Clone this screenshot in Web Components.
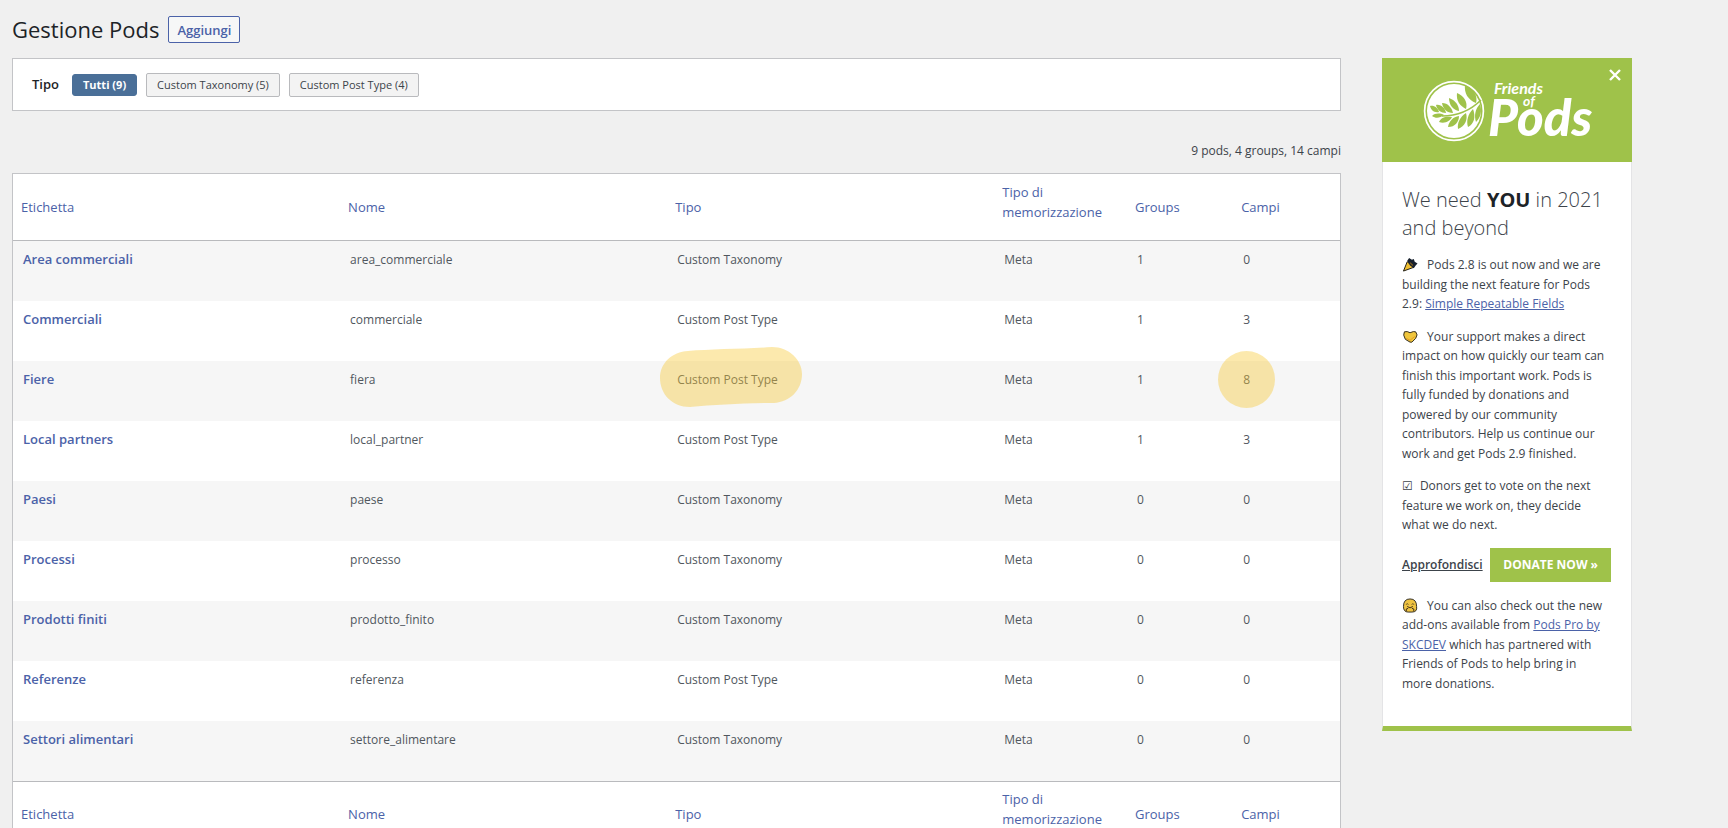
<!DOCTYPE html>
<html lang="it">
<head>
<meta charset="utf-8">
<title>Gestione Pods</title>
<style>
  body { margin: 0; background: #f0f0f0; color: #3c434a; font: 13px/1.5 "Open Sans", "Noto Sans", sans-serif; --link: #4b62a8; --line: #c3c4c7; --green: #9fc24a; }
</style>
</head>
<body>
<pods-page>
  <pods-heading>Gestione Pods</pods-heading>
  <pods-filter></pods-filter>
  <pods-table></pods-table>
  <friends-callout slot="aside"></friends-callout>
</pods-page>

<script>
const define = (name, html, setup) => customElements.define(name, class extends HTMLElement {
  constructor() {
    super();
    this.attachShadow({ mode: "open" }).innerHTML = html;
    if (setup) setup(this.shadowRoot, this);
  }
});

define("pods-page", `
  <style>
    :host { display: grid; grid-template-columns: minmax(0, 1fr) 250px; column-gap: 41px; padding: 12px 96px 0 12px; align-items: start; }
    aside { margin-top: 46px; }
    main { min-width: 0; }
  </style>
  <main><slot></slot></main>
  <aside><slot name="aside"></slot></aside>`);

define("pods-heading", `
  <style>
    :host { display: flex; align-items: center; gap: 9px; height: 34px; margin-bottom: 12px; }
    h1 { margin: 0; font-size: 22px; line-height: 34px; font-weight: 400; color: #1d2327; }
    a { box-sizing: border-box; height: 27px; padding: 0 8px; border: 1px solid var(--link); border-radius: 2px; background: #f6f7f7; color: var(--link); font-size: 13px; line-height: 26px; font-weight: 600; text-decoration: none; }
  </style>
  <h1><slot></slot></h1><a href="#add">Aggiungi</a>`);

define("pods-filter", `
  <style>
    :host { display: flex; align-items: center; box-sizing: border-box; height: 53px; padding: 0 19px; gap: 9px; background: #fff; border: 1px solid var(--line); }
    strong { font-size: 13px; font-weight: 600; color: #1d2327; margin-right: 4px; }
    button { box-sizing: border-box; height: 24px; padding: 0 10px; border: 1px solid #b9babd; border-radius: 2px; background: #f3f3f3; color: #3c434a; font: 11px/22px "Open Sans", "Noto Sans", sans-serif; white-space: nowrap; }
    button[aria-pressed="true"] { height: 22px; line-height: 20px; background: #4a6f98; border-color: #4a6f98; border-radius: 3px; color: #fff; font-weight: 700; }
  </style>
  <strong>Tipo</strong>
  <button type="button" aria-pressed="true">Tutti (9)</button>
  <button type="button" aria-pressed="false">Custom Taxonomy (5)</button>
  <button type="button" aria-pressed="false">Custom Post Type (4)</button>`);

define("marker-highlight", `
  <style>
    :host { position: absolute; pointer-events: none; display: block; }
    :host([shape="pill"]) { left: -7px; top: -14px; }
    :host([shape="dot"]) { left: -15px; top: -10px; }
    svg { display: none; fill: #f8c832; fill-opacity: .4; }
    :host([shape="pill"]) .pill, :host([shape="dot"]) .dot { display: block; }
  </style>
  <svg class="pill" width="142" height="60" viewBox="0 0 142 60"><path d="M28 4 C50 2 85 2 112 0 C129 0 142 13 142 27 C142 43 130 55 114 56 C85 56 55 58 30 60 C12 60 0 47 0 31 C0 16 12 5 28 4Z"/></svg>
  <svg class="dot" width="57" height="57" viewBox="0 0 57 57"><circle cx="28.5" cy="28.5" r="28.5"/></svg>`);

const columns = ["Etichetta", "Nome", "Tipo", "Tipo di memorizzazione", "Groups", "Campi"];
const TAX = "Custom Taxonomy", CPT = "Custom Post Type";
const pods = [
  ["Area commerciali", "area_commerciale", TAX, "Meta", 1, 0],
  ["Commerciali", "commerciale", CPT, "Meta", 1, 3],
  ["Fiere", "fiera", CPT, "Meta", 1, 8],
  ["Local partners", "local_partner", CPT, "Meta", 1, 3],
  ["Paesi", "paese", TAX, "Meta", 0, 0],
  ["Processi", "processo", TAX, "Meta", 0, 0],
  ["Prodotti finiti", "prodotto_finito", TAX, "Meta", 0, 0],
  ["Referenze", "referenza", CPT, "Meta", 0, 0],
  ["Settori alimentari", "settore_alimentare", TAX, "Meta", 0, 0]
];
const marks = { "fiera:2": "pill", "fiera:5": "dot" };

define("pods-table", `
  <style>
    :host { display: block; }
    .count { margin: 30px 0 12px; text-align: right; font-size: 12px; line-height: 20px; color: #3c434a; }
    .frame { border: 1px solid var(--line); background: #fff; }
    table { width: 100%; border-collapse: separate; border-spacing: 0; table-layout: fixed; }
    .wide { width: 24.65%; } .store { width: 10%; } .num { width: 8%; }
    th { height: 67px; box-sizing: border-box; padding: 8px 8px 18px; text-align: left; vertical-align: middle; font-weight: 400; line-height: 20px; }
    thead th { border-bottom: 1px solid #b9babd; }
    th.single { padding-top: 16px; padding-bottom: 16px; }
    tfoot th { border-top: 1px solid #b9babd; padding-top: 6px; }
    tfoot th.single { padding-top: 14px; }
    th a { color: var(--link); text-decoration: none; font-size: 13px; }
    td { position: relative; height: 60px; box-sizing: border-box; padding: 8px 10px; vertical-align: top; font-size: 12px; line-height: 21px; color: #50575e; }
    td a { color: var(--link); font-size: 13px; font-weight: 600; text-decoration: none; }
    tbody tr:nth-child(odd) { background: #f6f6f6; }
  </style>
  <p class="count">9 pods, 4 groups, 14 campi</p>
  <div class="frame"><table>
    <colgroup><col class="wide"><col class="wide"><col class="wide"><col class="store"><col class="num"><col></colgroup>
    <thead></thead><tbody></tbody><tfoot></tfoot>
  </table></div>`, root => {
  const head = "<tr>" + columns.map(c => `<th scope="col" class="${c.length > 12 ? "" : "single"}"><a href="#sort">${c}</a></th>`).join("") + "</tr>";
  root.querySelector("thead").innerHTML = head;
  root.querySelector("tfoot").innerHTML = head;
  root.querySelector("tbody").innerHTML = pods.map(p => "<tr>" + p.map((v, i) => {
    const shape = marks[p[1] + ":" + i];
    return `<td>${i ? v : `<a href="#edit">${v}</a>`}${shape ? `<marker-highlight shape="${shape}"></marker-highlight>` : ""}</td>`;
  }).join("") + "</tr>").join("");
});

define("friends-logo", `
  <style>
    :host { display: block; }
    svg { display: block; overflow: visible; }
    text { font-family: Lato, sans-serif; font-style: italic; fill: #fff; }
  </style>
  <svg width="170" height="74" viewBox="0 0 170 74" role="img" aria-label="Friends of Pods">
    <circle cx="32" cy="38" r="29.4" fill="none" stroke="#fff" stroke-width="1.7"/>
    <circle cx="32" cy="38" r="27" fill="#fff"/>
    <path d="M20 43 C36 43 48 38 59 27" fill="none" stroke="#9fc24a" stroke-width="1.6"/>
    <g fill="#9fc24a">
      <path d="M8 33 C12 32 16 35 17 39 C12 40 9 37 8 33Z"/>
      <path d="M14 32 C19 31 23 35 24 40 C19 40 15 37 14 32Z"/>
      <path d="M20 30 C26 30 30 35 31 40 C25 40 21 36 20 30Z"/>
      <path d="M27 25 C33 27 37 32 37 38 C31 37 27 32 27 25Z"/>
      <path d="M35 20 C42 23 46 29 44 36 C38 33 34 28 35 20Z"/>
      <path d="M43 12 C52 16 56 23 54 30 C46 27 42 20 43 12Z"/>
      <path d="M10 43 C13 40 18 40 22 42 C18 45 14 46 10 43Z"/>
      <path d="M17 49 C19 44 24 43 30 44 C28 48 23 51 17 49Z"/>
      <path d="M26 54 C27 48 31 44 37 43 C37 49 33 54 26 54Z"/>
      <path d="M36 56 C35 50 38 44 44 40 C46 47 43 53 36 56Z"/>
      <path d="M46 54 C44 48 46 41 51 36 C54 44 52 51 46 54Z"/>
      <path d="M54 49 C52 43 53 36 58 31 C60 38 59 44 54 49Z"/>
    </g>
    <text x="72" y="21" font-size="16" font-weight="700">Friends</text>
    <text x="101" y="33" font-size="14" font-weight="700">of</text>
    <text x="66" y="63" font-size="51" font-weight="900">Pods</text>
  </svg>`);

const icons = {
  party: `<path d="M1 15 L5 5 L12 11Z" fill="#efbf32" stroke="#15130d"/><path d="M5 4 L7 1 L10 3 L12 2 L13 5 L16 7 L14 9 L12 12 L8 9Z" fill="#17202d"/><path d="M8 6 L11 9" stroke="#7a5b20" stroke-width="1.4"/>`,
  heart: `<path d="M8 14 L3 11 Q0 6 2 3 Q5 2 8 4 Q12 2 14 3 Q17 6 14 10 L10 14Z" fill="#f0c63d" stroke="#2a251c"/><path d="M4 10 L8 12 L13 8" fill="none" stroke="#e19a24"/>`,
  hug: `<path d="M8 1 Q15 1 15 9 Q16 15 10 15 H6 Q1 15 1 9 Q1 1 8 1Z" fill="#efc341" stroke="#2a251c"/><path d="M4 7q1-2 2 0M10 7q1-2 2 0M5 9q3 3 6 0M4 14q-1-3 2-3M12 14q1-3-2-3" fill="none" stroke="#352817"/>`
};
customElements.define("emoji-icon", class extends HTMLElement {
  constructor() { super(); this.attachShadow({ mode: "open" }); }
  connectedCallback() {
    this.shadowRoot.innerHTML = `<style>:host { display: inline-block; width: 17px; height: 15px; margin-right: 5px; vertical-align: -3px; } svg { display: block; }</style>
      <svg width="17" height="15" viewBox="0 0 17 16" aria-hidden="true">${icons[this.getAttribute("name")]}</svg>`;
  }
});

define("friends-callout", `
  <style>
    :host { display: block; box-sizing: border-box; background: #fff; border: 1px solid #e4e4e6; border-top: 0; border-bottom: 5px solid var(--green); }
    header { position: relative; height: 104px; margin: 0 -1px; background: var(--green); display: flex; justify-content: center; align-items: center; }
    .close { position: absolute; top: 7px; right: 7px; width: 20px; height: 20px; padding: 0; border: 0; background: none; }
    .close svg { display: block; margin: 4px; }
    .body { padding: 24px 18px 20px 19px; }
    h2 { margin: 0 0 13px; font-size: 20px; line-height: 28px; font-weight: 300; color: #3c434a; }
    h2 b { font-weight: 700; color: #1d2327; }
    p { margin: 0 0 13px; font-size: 12px; line-height: 1.625; color: #3c434a; }
    a { color: var(--link); }
    .actions { display: flex; align-items: center; justify-content: space-between; margin: 0 2px 14px 0; }
    .more { color: #3c434a; font-size: 12px; font-weight: 600; }
    .donate { background: var(--green); color: #fff; font-size: 12px; line-height: 34px; font-weight: 700; padding: 0 13px; text-decoration: none; white-space: nowrap; }
    .check { font-family: "DejaVu Sans", sans-serif; font-size: 12px; margin-right: 4px; line-height: 12px; }
  </style>
  <header>
    <friends-logo></friends-logo>
    <button class="close" type="button" aria-label="Chiudi"><svg width="12" height="12" viewBox="0 0 12 12"><path d="M1 1 L11 11 M11 1 L1 11" stroke="#fff" stroke-width="2.4"/></svg></button>
  </header>
  <div class="body">
    <h2>We need <b>YOU</b> in 2021<br>and beyond</h2>
    <p><emoji-icon name="party"></emoji-icon> Pods 2.8 is out now and we are<br>building the next feature for Pods<br>2.9: <a href="#fields">Simple Repeatable Fields</a></p>
    <p><emoji-icon name="heart"></emoji-icon> Your support makes a direct<br>impact on how quickly our team can<br>finish this important work. Pods is<br>fully funded by donations and<br>powered by our community<br>contributors. Help us continue our<br>work and get Pods 2.9 finished.</p>
    <p><span class="check">☑</span> Donors get to vote on the next<br>feature we work on, they decide<br>what we do next.</p>
    <div class="actions"><a class="more" href="#more">Approfondisci</a><a class="donate" href="#donate">DONATE NOW »</a></div>
    <p><emoji-icon name="hug"></emoji-icon> You can also check out the new<br>add-ons available from <a href="#pro">Pods Pro by<br>SKCDEV</a> which has partnered with<br>Friends of Pods to help bring in<br>more donations.</p>
  </div>`);
</script>
</body>
</html>
